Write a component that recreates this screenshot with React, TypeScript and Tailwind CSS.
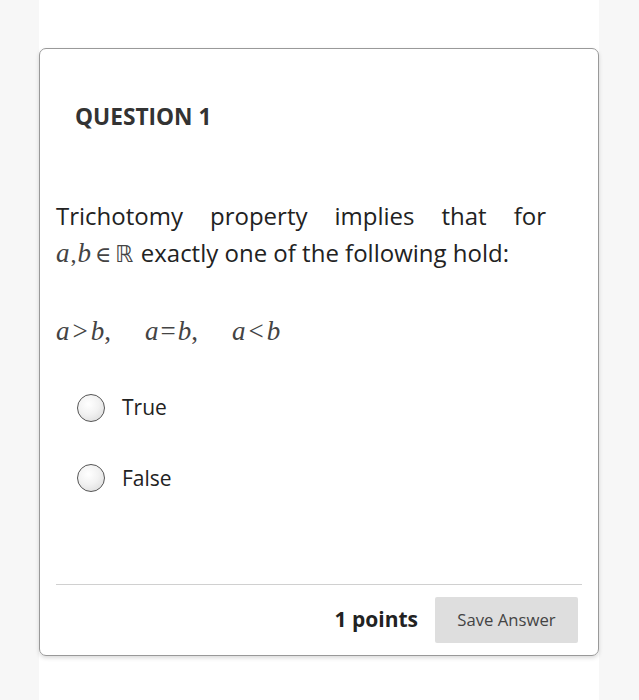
import React from "react";

function Radio({ label }: { label: string }) {
  return (
    <div className="flex items-center gap-[17px]">
      <span className="block w-[28px] h-[28px] rounded-full border-[1.5px] border-[#555] bg-[radial-gradient(circle_at_40%_35%,#ffffff_0%,#f2f2f2_45%,#d6d6d6_100%)]" />
      <span className="text-[21px] text-[#222]">{label}</span>
    </div>
  );
}

const serif = { fontFamily: '"Liberation Serif", serif' };

export default function App() {
  return (
    <div className="min-h-[700px] bg-[#f7f7f7]" style={{ fontFamily: '"Open Sans", sans-serif' }}>
      <div className="w-[560px] ml-[39px] min-h-[700px] bg-white pt-[48px]">
        <div className="border-[1.5px] border-[#999] rounded-[7px] shadow-[0_2px_4px_rgba(0,0,0,0.15)] h-[608px] flex flex-col px-[16px]">
          <div className="pl-[19px] pt-[53px] text-[22.7px] leading-[30px] font-bold text-[#333]">QUESTION 1</div>
          <p className="mt-[65px] w-[490px] text-[24px] leading-[37px] text-[#222] text-justify">
            Trichotomy property implies that for{" "}
            <span className="inline-block text-[#444] tracking-[1px]" style={serif}>
              <i className="text-[27px]">a</i>,<i className="text-[27px]">b</i>
              <span style={{ fontFamily: '"DejaVu Serif", serif' }} className="text-[22px] mx-[3px]">∈</span>
              <span style={{ fontFamily: '"DejaVu Sans", sans-serif' }} className="text-[23px]">ℝ</span>
            </span>{" "}
            exactly one of the following hold:
          </p>
          <div className="mt-[43px] text-[27px] leading-[30px] text-[#444] flex items-baseline" style={serif}>
            <i>a</i>
            <span className="mx-[3px]">{">"}</span>
            <i>b</i>
            <span>,</span>
            <i className="ml-[34px]">a</i>
            <span className="mx-[2px]">=</span>
            <i>b</i>
            <span>,</span>
            <i className="ml-[34px]">a</i>
            <span className="mx-[3px]">{"<"}</span>
            <i>b</i>
          </div>
          <div className="mt-[46px] pl-[21px] flex flex-col gap-[39px]">
            <Radio label="True" />
            <Radio label="False" />
          </div>
          <div className="mt-auto border-t-[1.5px] border-[#d0d0d0]" />
          <div className="flex items-center justify-end gap-[17px] pr-[4px] pt-[12px] pb-[12px]">
            <span className="text-[21px] font-bold text-[#222]">1 points</span>
            <button className="w-[143px] h-[46px] bg-[#dedede] rounded-[2px] text-[16.7px] text-[#444]">Save Answer</button>
          </div>
        </div>
      </div>
    </div>
  );
}
